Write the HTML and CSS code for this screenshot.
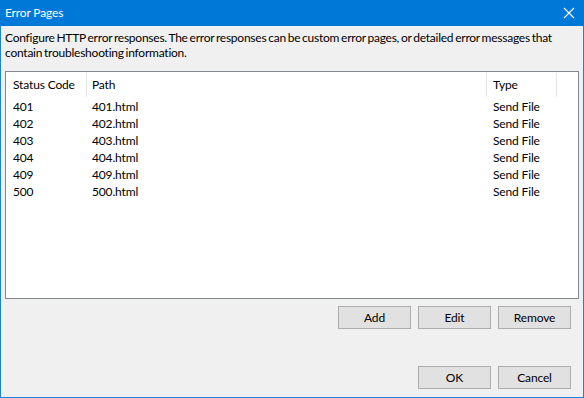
FILE: index.html
```html
<!DOCTYPE html>
<html>
<head>
<meta charset="utf-8">
<link rel="stylesheet" href="styles.css">
</head>
<body>
<div class="window">
  <div class="titlebar">
    <span class="title">Error Pages</span>
    <svg class="close" width="12" height="12" viewBox="0 0 12 12"><path d="M1 1 L11 11 M11 1 L1 11" stroke="#fff" stroke-width="1.1" fill="none"/></svg>
  </div>
  <div class="body">
    <p class="desc">Configure HTTP error responses. The error responses can be custom error pages, or detailed error messages that contain troubleshooting information.</p>
    <div class="list">
      <div class="row head">
        <div class="c c1">Status Code</div>
        <div class="c c2">Path</div>
        <div class="c c3">Type</div>
        <div class="c c4"></div>
      </div>
      <div class="row"><div class="c c1">401</div><div class="c c2">401.html</div><div class="c c3">Send File</div></div>
      <div class="row"><div class="c c1">402</div><div class="c c2">402.html</div><div class="c c3">Send File</div></div>
      <div class="row"><div class="c c1">403</div><div class="c c2">403.html</div><div class="c c3">Send File</div></div>
      <div class="row"><div class="c c1">404</div><div class="c c2">404.html</div><div class="c c3">Send File</div></div>
      <div class="row"><div class="c c1">409</div><div class="c c2">409.html</div><div class="c c3">Send File</div></div>
      <div class="row"><div class="c c1">500</div><div class="c c2">500.html</div><div class="c c3">Send File</div></div>
    </div>
    <div class="actions">
      <button class="btn">Add</button>
      <button class="btn">Edit</button>
      <button class="btn">Remove</button>
    </div>
    <div class="footer">
      <button class="btn">OK</button>
      <button class="btn">Cancel</button>
    </div>
  </div>
</div>
</body>
</html>
```
FILE: styles.css
```css
* { box-sizing: border-box; }
html, body { margin: 0; padding: 0; }
body {
  font-family: Lato, "Noto Sans", sans-serif;
  font-size: 12px;
  letter-spacing: -0.15px;
  color: #000;
  background: #f0f0f0;
}
.window {
  width: 584px;
  height: 398px;
  border: 1px solid #1a82d9;
  border-top: none;
  background: #f0f0f0;
  display: flex;
  flex-direction: column;
}
.titlebar {
  height: 26px;
  margin: 0 -1px;
  background: #0078d7;
  color: #fff;
  display: flex;
  align-items: center;
  justify-content: space-between;
  padding: 0 9px 0 5px;
  flex: none;
}
.title { font-size: 12px; line-height: 26px; }
.close { display: block; margin-top: -1px; }
.body {
  flex: 1;
  display: flex;
  flex-direction: column;
  padding: 0 0 8px 0;
}
.desc {
  margin: 4px 4px 0 4px;
  line-height: 15px;
  height: 41px;
  letter-spacing: -0.24px;
  word-spacing: -1px;
}
.list {
  margin: 0 4px;
  height: 228px;
  border: 1px solid #828790;
  background: #fff;
  padding-top: 1px;
}
.row {
  display: flex;
  height: 17px;
  line-height: 17px;
}
.row.head {
  height: 25px;
  line-height: 24px;
}
.c { white-space: nowrap; overflow: hidden; }
.c1 { width: 81px; padding-left: 7px; }
.c2 { width: 400px; padding-left: 5px; }
.c3 { width: 70px; padding-left: 6px; }
.c4 { flex: 1; }
.head .c1, .head .c2, .head .c3 {
  border-right: 1px solid #e5e5e5;
}
.head .c { height: 24px; }
.actions {
  display: flex;
  justify-content: flex-end;
  gap: 7px;
  margin: 7px 12px 0 0;
}
.footer {
  display: flex;
  justify-content: flex-end;
  gap: 7px;
  margin: auto 12px 0 0;
}
.btn {
  width: 73px;
  height: 23px;
  border: 1px solid #adadad;
  background: #e1e1e1;
  font-family: inherit;
  font-size: 12px;
  letter-spacing: inherit;
  color: #000;
  padding: 0;
  margin: 0;
  line-height: 21px;
}
```
